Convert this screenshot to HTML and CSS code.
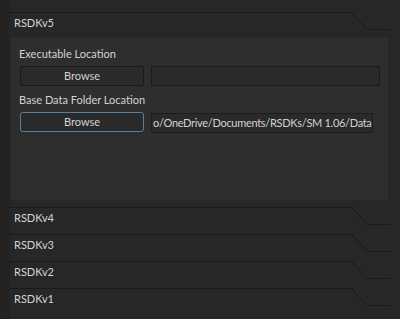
FILE: index.html
```html
<!DOCTYPE html>
<html>
<head>
<meta charset="utf-8">
<link rel="stylesheet" href="styles.css">
</head>
<body>
<div class="accordion">
  <div class="section">
    <div class="hdr hdr-first">
      <div class="hdr-label">RSDKv5</div>
      <svg class="hdr-diag" width="16" height="18" viewBox="0 0 16 18"><line x1="0" y1="0.5" x2="16" y2="17.5" stroke="#1a1a1a" stroke-width="1.2"/><line x1="1" y1="0.5" x2="17" y2="17.5" stroke="#343434" stroke-width="0.8"/></svg>
      <div class="hdr-tail"></div>
    </div>
    <div class="panel">
      <div class="field-label">Executable Location</div>
      <div class="field-row">
        <button class="btn">Browse</button>
        <div class="path path-wide"></div>
      </div>
      <div class="field-label">Base Data Folder Location</div>
      <div class="field-row">
        <button class="btn btn-focus">Browse</button>
        <div class="path path-narrow"><span>o/OneDrive/Documents/RSDKs/SM 1.06/Data</span></div>
      </div>
    </div>
  </div>
  <div class="hdr">
    <div class="hdr-label">RSDKv4</div>
    <svg class="hdr-diag" width="16" height="18" viewBox="0 0 16 18"><line x1="0" y1="0.5" x2="16" y2="17.5" stroke="#1a1a1a" stroke-width="1.2"/><line x1="1" y1="0.5" x2="17" y2="17.5" stroke="#343434" stroke-width="0.8"/></svg>
    <div class="hdr-tail"></div>
  </div>
  <div class="hdr">
    <div class="hdr-label">RSDKv3</div>
    <svg class="hdr-diag" width="16" height="18" viewBox="0 0 16 18"><line x1="0" y1="0.5" x2="16" y2="17.5" stroke="#1a1a1a" stroke-width="1.2"/><line x1="1" y1="0.5" x2="17" y2="17.5" stroke="#343434" stroke-width="0.8"/></svg>
    <div class="hdr-tail"></div>
  </div>
  <div class="hdr">
    <div class="hdr-label">RSDKv2</div>
    <svg class="hdr-diag" width="16" height="18" viewBox="0 0 16 18"><line x1="0" y1="0.5" x2="16" y2="17.5" stroke="#1a1a1a" stroke-width="1.2"/><line x1="1" y1="0.5" x2="17" y2="17.5" stroke="#343434" stroke-width="0.8"/></svg>
    <div class="hdr-tail"></div>
  </div>
  <div class="hdr">
    <div class="hdr-label">RSDKv1</div>
    <svg class="hdr-diag" width="16" height="18" viewBox="0 0 16 18"><line x1="0" y1="0.5" x2="16" y2="17.5" stroke="#1a1a1a" stroke-width="1.2"/><line x1="1" y1="0.5" x2="17" y2="17.5" stroke="#343434" stroke-width="0.8"/></svg>
    <div class="hdr-tail"></div>
  </div>
</div>
</body>
</html>
```
FILE: styles.css
```css
html, body {
  margin: 0;
  padding: 0;
  height: 100%;
}
body {
  background: #232323;
  font-family: Lato, "Noto Sans", sans-serif;
  font-size: 11px;
  color: #d2d2d2;
  overflow: hidden;
}
.accordion {
  margin-left: 10px;
  width: 390px;
  min-height: 100%;
  padding-top: 12px;
  box-sizing: border-box;
  background: #272727;
}
.hdr {
  display: flex;
  height: 27px;
}
.hdr-first {
  height: 26px;
}
.hdr-label {
  width: 342px;
  box-sizing: border-box;
  border-top: 1px solid #1a1a1a;
  padding-left: 4px;
  line-height: 19px;
  color: #d4d4d4;
}
.hdr-diag {
  display: block;
  flex: none;
}
.hdr-tail {
  width: 22px;
  height: 18px;
  box-sizing: border-box;
  border-bottom: 1px solid #1a1a1a;
}
.section {
  padding-bottom: 7px;
}
.panel {
  margin-left: 1px;
  width: 377px;
  height: 162px;
  box-sizing: border-box;
  background: #2e2e2e;
  padding: 7px 8px 0 8px;
}
.field-label {
  line-height: 18px;
  height: 18px;
}
.field-row {
  display: flex;
  align-items: flex-start;
  gap: 7px;
  margin: 3px 0 5px 1px;
}
.btn {
  width: 124px;
  height: 20px;
  box-sizing: border-box;
  background: #2a2a2a;
  border: 1px solid #1a1a1a;
  border-radius: 2px;
  color: #d2d2d2;
  font-family: inherit;
  font-size: 11px;
  padding: 0;
  line-height: 18px;
}
.btn-focus {
  border-color: #5c7e96;
  border-radius: 3px;
}
.path {
  height: 20px;
  box-sizing: border-box;
  background: #2a2a2a;
  border: 1px solid #1c1c1c;
  display: flex;
  align-items: center;
  overflow: hidden;
  white-space: nowrap;
  padding-left: 1px;
  line-height: 18px;
  letter-spacing: -0.3px;
}
.path-wide {
  width: 229px;
}
.path-narrow {
  width: 222px;
  margin-top: 1px;
}
.path span {
  flex: none;
}
```
